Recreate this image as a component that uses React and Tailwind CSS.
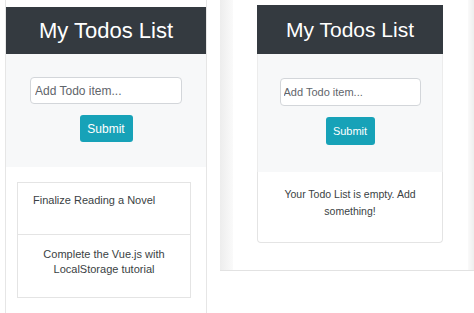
import React from 'react';

const LEFT_TODOS = [
  { text: 'Finalize Reading a Novel', cls: 'h-[53px] pt-[10px] pl-[15px] text-left' },
  { text: 'Complete the Vue.js with LocalStorage tutorial', cls: 'h-[63px] pt-[12px] px-[22px] text-center border-t-0' },
];

function LeftPanel() {
  return (
    <div className="ml-[5px] w-[202px] shrink-0 border-x border-[#e6e6e6] pt-[7px] flex flex-col">
      <div className="h-[47px] bg-[#343a40] text-white text-[22px] flex items-center justify-center">
        My Todos List
      </div>
      <div className="h-[113px] bg-[#f7f8f9] flex flex-col items-center pt-[23px]">
        <input
          className="w-[152px] h-[27px] rounded-[4px] border border-[#d3d6da] bg-white px-[4px] text-[12px] text-[#495057] placeholder:text-[#5f656b] outline-none"
          placeholder="Add Todo item..."
        />
        <button className="mt-[11px] w-[53px] h-[27px] rounded-[3px] bg-[#17a2b8] text-white text-[12px]">
          Submit
        </button>
      </div>
      <ul className="ml-[11px] w-[174px] pt-[15px]">
        {LEFT_TODOS.map((t) => (
          <li
            key={t.text}
            className={`border border-[#e4e4e4] text-[11px] leading-[15px] text-[#3a3f44] ${t.cls}`}
          >
            {t.text}
          </li>
        ))}
      </ul>
    </div>
  );
}

function RightPanel() {
  return (
    <div className="ml-[13px] w-[254px] h-[271px] shrink-0 flex border-b border-[#e2e2e2]">
      <div className="w-[13px] bg-gradient-to-r from-[#ededed] to-[#fafafa]" />
      <div className="flex-1 bg-white pl-[24px] pt-[5px]">
        <div className="w-[186px]">
          <div className="h-[49px] bg-[#343a40] text-white text-[21px] flex items-center justify-center">
            My Todos List
          </div>
          <div className="h-[118px] bg-[#f7f8f9] flex flex-col items-center pt-[24px] border-x border-[#ececec]">
            <input
              className="w-[141px] h-[28px] rounded-[4px] border border-[#d3d6da] bg-white px-[3px] text-[11px] text-[#495057] placeholder:text-[#5f656b] outline-none"
              placeholder="Add Todo item..."
            />
            <button className="mt-[11px] w-[49px] h-[28px] rounded-[3px] bg-[#17a2b8] text-white text-[11px]">
              Submit
            </button>
          </div>
          <div className="h-[71px] border border-t-0 border-[#e4e4e4] rounded-b-[4px] pt-[14px] px-[18px] text-center text-[10.5px] leading-[17px] text-[#3a3f44]">
            Your Todo List is empty. Add something!
          </div>
        </div>
      </div>
      <div className="w-[6px] bg-gradient-to-r from-[#fafafa] to-[#eeeeee]" />
    </div>
  );
}

export default function App() {
  return (
    <div className="w-[474px] h-[313px] bg-white flex overflow-hidden font-['Liberation_Sans',Arial,sans-serif]">
      <LeftPanel />
      <RightPanel />
    </div>
  );
}
